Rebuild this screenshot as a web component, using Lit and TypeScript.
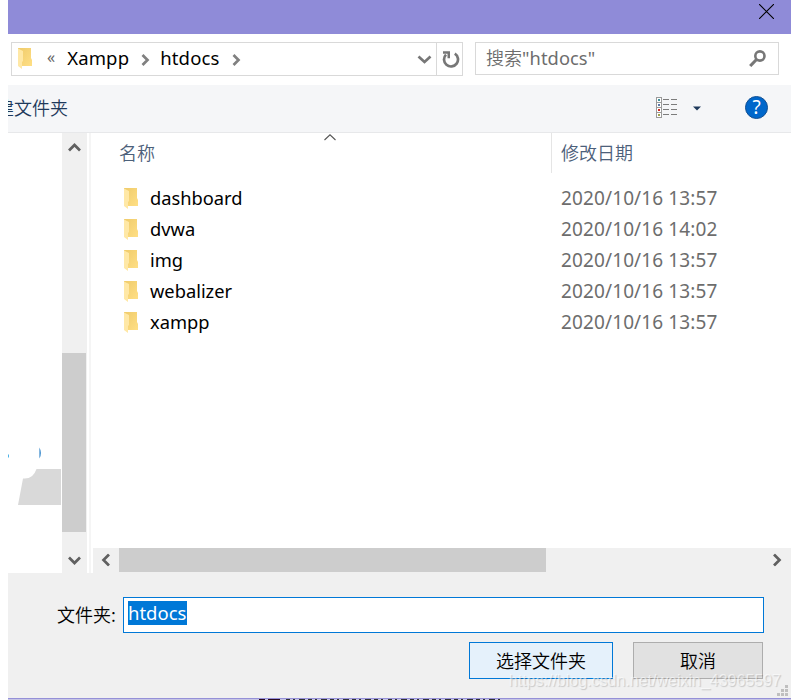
import { LitElement, html, svg, css } from "lit";
import { customElement, property } from "lit/decorators.js";

interface Entry {
  name: string;
  modified: string;
}

const ENTRIES: Entry[] = [
  { name: "dashboard", modified: "2020/10/16 13:57" },
  { name: "dvwa", modified: "2020/10/16 14:02" },
  { name: "img", modified: "2020/10/16 13:57" },
  { name: "webalizer", modified: "2020/10/16 13:57" },
  { name: "xampp", modified: "2020/10/16 13:57" },
];

@customElement("folder-icon")
class FolderIcon extends LitElement {
  static styles = css`
    :host { display: block; width: 16px; height: 22px; }
    svg { display: block; }
  `;
  render() {
    return html`<svg width="16" height="22" viewBox="0 0 16 22">
      <defs>
        <linearGradient id="g" x1="0" y1="0" x2="1" y2="1">
          <stop offset="0" stop-color="#efcb6b" />
          <stop offset="1" stop-color="#ffdf85" />
        </linearGradient>
      </defs>
      <path d="M1 0H14V10L15 12V18H2Z" fill="url(#g)" />
      <path d="M1 0.5L6 3V13L5 14V21L1 18Z" fill="#ffe8a6" />
    </svg>`;
  }
}

@customElement("scroll-arrow")
class ScrollArrow extends LitElement {
  @property() dir = "up";
  static styles = css`
    :host { display: block; width: 13px; height: 12px; }
    svg { display: block; }
    .down { transform: rotate(180deg); }
    .left { transform: rotate(-90deg); }
    .right { transform: rotate(90deg); }
  `;
  render() {
    return html`<svg class=${this.dir} width="13" height="12" viewBox="0 0 13 12">
      <path d="M1 8.5L6.5 3L12 8.5" fill="none" stroke="#606060" stroke-width="2.7" />
    </svg>`;
  }
}

@customElement("app-root")
class AppRoot extends LitElement {
  static styles = css`
    :host {
      display: block;
      width: 791px;
      height: 700px;
      overflow: hidden;
      background: #fff;
      color: #000;
      font-family: "Noto Sans", "Noto Sans CJK SC", sans-serif;
      font-size: 18.3px;
      line-height: 24px;
      white-space: nowrap;
    }
    * { box-sizing: border-box; }
    svg { display: block; }
    .cjk { font-family: "Noto Sans CJK SC", sans-serif; font-size: 18px; font-weight: 350; }
    .dialog {
      position: relative;
      display: flex;
      flex-direction: column;
      height: 700px;
      margin-left: 8px;
    }
    .title {
      display: flex;
      justify-content: flex-end;
      height: 34px;
      padding: 4px 17px 0 0;
      background: #8f8bd8;
    }
    .nav { display: flex; height: 51px; padding: 8px 0 0 3px; }
    .box { display: flex; align-items: center; border: 1px solid #d9d9d9; }
    .address { width: 452px; height: 34px; padding-left: 5px; }
    .laquo { margin: -4px 12px 0 14px; font-size: 16px; color: #666; }
    .crumb { margin-top: -2px; font-size: 18.5px; letter-spacing: 0.15px; }
    .sep { margin: 1px 10px 0 12px; }
    .drop { margin-left: auto; margin-right: 4px; }
    .refresh {
      display: flex;
      align-items: center;
      justify-content: center;
      width: 26px;
      height: 32px;
      padding-left: 2px;
      border-left: 1px solid #d9d9d9;
    }
    .search {
      width: 304px;
      height: 33px;
      margin-left: 12px;
      padding: 0 12px 0 10px;
      justify-content: space-between;
      color: #6d6d6d;
    }
    .query { margin-top: -2px; letter-spacing: 0.05px; }
    .toolbar {
      display: flex;
      align-items: center;
      height: 48px;
      padding-right: 23px;
      background: #f5f6f8;
      border-bottom: 1px solid #e7e8ea;
      color: #1e395b;
    }
    .clip { flex: 1; overflow: hidden; margin-top: -3px; }
    .newfolder { margin-left: -12px; }
    .views { margin: -2px 15px 0 0; }
    .caret { margin-right: 44px; }
    .help {
      width: 23px;
      height: 23px;
      margin-top: -2px;
      border: 1px solid #124f92;
      border-radius: 50%;
      background: #0067cb;
      color: #fff;
      font-size: 19px;
      line-height: 21px;
      text-align: center;
    }
    .body { display: flex; height: 440px; }
    .tree { width: 54px; padding-top: 312px; }
    .vscroll {
      display: flex;
      flex-direction: column;
      width: 25px;
      background: #f0f0f0;
    }
    .vup { height: 220px; padding: 9px 0 0 6px; }
    .vthumb { width: 24px; height: 179px; background: #cdcdcd; }
    .vdown { padding: 22px 0 0 6px; }
    .split { width: 4px; margin-right: 2px; border-right: 2px solid #f5f5f5; }
    .list { display: flex; flex-direction: column; flex: 1; }
    .head { display: flex; height: 40px; color: #4c607a; }
    .col-name {
      display: flex;
      width: 459px;
      padding: 7px 0 0 26px;
      border-right: 1px solid #e5e5e5;
    }
    .sort { margin: -6px 0 0 169px; }
    .col-date { padding: 7px 0 0 9px; }
    .rows { flex: 1; padding-top: 10px; }
    .row { display: flex; align-items: center; height: 31px; padding-left: 30px; }
    .name { width: 411px; margin: -2px 0 0 11px; }
    .date { margin-top: -2px; color: #6d6d6d; font-size: 19px; letter-spacing: 0.12px; }
    .hscroll {
      display: flex;
      height: 25px;
      background: #f0f0f0;
    }
    .hleft { width: 26px; padding: 6px 0 0 7px; }
    .hthumb { width: 427px; height: 24px; background: #cdcdcd; }
    .hright { margin-left: auto; padding: 6px 8px 0 0; }
    .footer { flex: 1; background: #f0f0f0; }
    .field { display: flex; padding: 24px 0 0 49px; }
    .label { width: 66px; padding-top: 5px; }
    .input {
      width: 641px;
      height: 36px;
      padding: 3px 4px;
      border: 1px solid #0078d7;
      background: #fff;
    }
    .sel {
      display: inline-block;
      width: 59px;
      height: 24px;
      background: #0078d7;
      color: #fff;
      font-size: 18.5px;
      line-height: 24px;
    }
    .buttons { display: flex; gap: 20px; padding: 9px 0 0 461px; }
    .btn {
      width: 130px;
      height: 37px;
      border: 1px solid #adadad;
      background: #e1e1e1;
      text-align: center;
      line-height: 34px;
    }
    .primary { width: 144px; border-color: #0078d7; background: #e5f1fb; }
    .edge { height: 2px; background: #c6c5e4; border-top: 1px solid #9590d8; }
    .behind { margin-left: 250px; }
    .grip { position: absolute; right: 3px; bottom: 4px; }
    .mark {
      position: absolute;
      right: 10px;
      bottom: 7px;
      font-family: "Liberation Sans", sans-serif;
      font-size: 16px;
      color: rgba(255, 255, 255, 0.6);
      text-shadow: 1px 1px 1px rgba(0, 0, 0, 0.17);
    }
  `;

  private chevron() {
    return html`<svg class="sep" width="9" height="12" viewBox="0 0 9 12">
      <path d="M1.5 1L6.5 6L1.5 11" fill="none" stroke="#808080" stroke-width="2.7" />
    </svg>`;
  }

  private viewsIcon() {
    return html`<svg class="views" width="22" height="21" viewBox="0 0 22 21">
      ${["#3f8f9a", "#5b78a8", "#d22a1e", "#9da04d"].map(
        (c, i) => svg`
          <rect x="0.5" y=${i * 5 + 0.5} width="5" height="5" fill="#fff" stroke="#9a9a9a" />
          <rect x="2" y=${i * 5 + 2} width="2" height="2" fill=${c} />
          <path d=${`M7 ${i * 5 + 2.5}h6M15 ${i * 5 + 2.5}h6`} stroke="#7c7c7c" />`
      )}
    </svg>`;
  }

  render() {
    return html`
      <div class="dialog">
        <div class="title">
          <svg width="15" height="15" viewBox="0 0 15 15">
            <path d="M0 0L15 15M15 0L0 15" stroke="#000" stroke-width="1.1" />
          </svg>
        </div>
        <div class="nav">
          <div class="box address">
            <folder-icon></folder-icon>
            <span class="laquo">«</span>
            <span class="crumb">Xampp</span>${this.chevron()}
            <span class="crumb">htdocs</span>${this.chevron()}
            <svg class="drop" width="15" height="10" viewBox="0 0 15 10">
              <path d="M1.5 2.5L7.5 8L13.5 2.5" fill="none" stroke="#777" stroke-width="2.7" />
            </svg>
            <div class="refresh">
              <svg width="18" height="18" viewBox="0 0 18 18">
                <path d="M4 4.6A7 7 0 1 0 12.8 3.6" fill="none" stroke="#777" stroke-width="2.7" />
                <path d="M1 1.2H8V8.2H5.5V3.7H1Z" fill="#777" />
              </svg>
            </div>
          </div>
          <div class="box search">
            <span class="query"><span class="cjk">搜索</span>"htdocs"</span>
            <svg width="17" height="17" viewBox="0 0 17 17">
              <circle cx="10.9" cy="6" r="4.6" fill="none" stroke="#777" stroke-width="2.6" />
              <path d="M7.5 9.5L1.2 16" stroke="#777" stroke-width="3.1" />
            </svg>
          </div>
        </div>
        <div class="toolbar">
          <div class="clip"><div class="newfolder cjk">建文件夹</div></div>
          ${this.viewsIcon()}
          <svg class="caret" width="8" height="5" viewBox="0 0 8 5">
            <path d="M0 0.5H8L4 4.5Z" fill="#1e395b" />
          </svg>
          <div class="help">?</div>
        </div>
        <div class="body">
          <div class="tree">
            <svg width="54" height="60" viewBox="0 0 54 60">
              <path d="M0 9.5h1v3h-1z" fill="#4fb4e8" />
              <path d="M31.5 2.5Q34 8 31.5 13.5Z" fill="#0b6fc0" />
              <path d="M10 60L15 33.5Q25 34.5 28.5 24H53V60Z" fill="#d9d9d9" />
            </svg>
          </div>
          <div class="vscroll">
            <div class="vup"><scroll-arrow dir="up"></scroll-arrow></div>
            <div class="vthumb"></div>
            <div class="vdown"><scroll-arrow dir="down"></scroll-arrow></div>
          </div>
          <div class="split"></div>
          <div class="list">
            <div class="head cjk">
              <div class="col-name">
                名称
                <svg class="sort" width="12" height="7" viewBox="0 0 12 7">
                  <path d="M0.5 6L6 0.8L11.5 6" fill="none" stroke="#555" stroke-width="1.1" />
                </svg>
              </div>
              <div class="col-date">修改日期</div>
            </div>
            <div class="rows">
              ${ENTRIES.map(
                (e) => html`<div class="row">
                  <folder-icon></folder-icon>
                  <span class="name">${e.name}</span>
                  <span class="date">${e.modified}</span>
                </div>`
              )}
            </div>
            <div class="hscroll">
              <div class="hleft"><scroll-arrow dir="left"></scroll-arrow></div>
              <div class="hthumb"></div>
              <div class="hright"><scroll-arrow dir="right"></scroll-arrow></div>
            </div>
          </div>
        </div>
        <div class="footer">
          <div class="field">
            <div class="label cjk">文件夹:</div>
            <div class="input"><span class="sel">htdocs</span></div>
          </div>
          <div class="buttons">
            <div class="btn primary cjk">选择文件夹</div>
            <div class="btn cjk">取消</div>
          </div>
        </div>
        <div class="edge">
          <svg class="behind" width="242" height="1" viewBox="0 0 242 1">
            <path d="M1 .5H7M10 .5H22" stroke="#2b0a20" />
            <path d="M28 .5H125M130 .5H242" stroke="#333" stroke-dasharray="4 3 2 4 6 3" />
          </svg>
        </div>
        <svg class="grip" width="11" height="11" viewBox="0 0 11 11">
          <path d="M8 0h3v3h-3zM4 4h3v3h-3zM8 4h3v3h-3zM0 8h3v3h-3zM4 8h3v3h-3zM8 8h3v3h-3z" fill="#bfbfbf" />
        </svg>
        <div class="mark">https://blog.csdn.net/weixin_43965597</div>
      </div>
    `;
  }
}
